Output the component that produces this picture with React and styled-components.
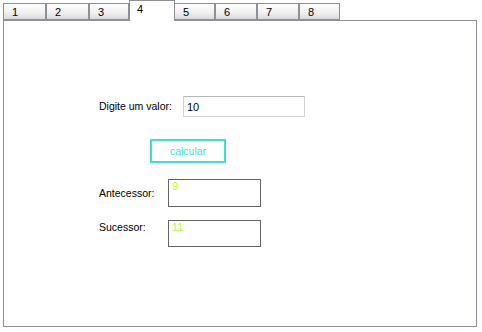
import React from "react";
import styled, { createGlobalStyle } from "styled-components";

const Global = createGlobalStyle`
  html, body { margin: 0; padding: 0; background: #ffffff; }
  body { font-family: "Liberation Sans", Arial, sans-serif; font-size: 11px; color: #000; }
`;

const Page = styled.div`
  width: 482px;
  height: 332px;
  padding-left: 3px;
  box-sizing: border-box;
`;

const TabStrip = styled.div`
  display: flex;
  align-items: flex-end;
  height: 20px;
  position: relative;
  z-index: 1;
`;

const Tab = styled.div`
  box-sizing: border-box;
  width: ${(p) => p.$w}px;
  height: ${(p) => (p.$active ? 21 : 17)}px;
  margin-left: ${(p) => p.$ml || 0}px;
  margin-bottom: ${(p) => (p.$active ? -1 : 0)}px;
  border: 1px solid #8d8f99;
  border-bottom: ${(p) => (p.$active ? "none" : "1px solid #8d8f99")};
  background: ${(p) =>
    p.$active ? "#ffffff" : "linear-gradient(#fdfdfd 0%, #f1f1f1 55%, #d9d9dc 100%)"};
  padding-left: ${(p) => (p.$active ? 7 : 8)}px;
  padding-top: 2px;
  font-size: 11px;
  line-height: 12px;
  color: #000;
`;

const Panel = styled.div`
  box-sizing: border-box;
  width: 474px;
  height: 307px;
  border: 1px solid #8d8f99;
  background: #fff;
  padding: 75px 0 0 95px;
`;

const Row = styled.div`
  display: flex;
  align-items: ${(p) => p.$align || "center"};
  margin-top: ${(p) => p.$mt || 0}px;
`;

const Label = styled.label`
  width: ${(p) => p.$w}px;
  flex: none;
  font-size: 10.5px;
  line-height: 13px;
  color: #000;
  padding-top: ${(p) => p.$pt || 0}px;
`;

const TextInput = styled.input`
  box-sizing: border-box;
  width: 122px;
  height: 21px;
  border: 1px solid #cfd2d6;
  border-top-color: #b3b6ba;
  padding: 0 0 0 3px;
  font-family: "Liberation Sans", Arial, sans-serif;
  font-size: 11px;
  color: #000000;
  -webkit-text-fill-color: #000000;
  outline: none;
  background: #fff;
`;

const CalcButton = styled.button`
  box-sizing: border-box;
  display: block;
  margin: 22px 0 0 51px;
  width: 76px;
  height: 24px;
  border: 2px solid #40e0d0;
  background: #fff;
  color: #40e0d0;
  font-family: "Liberation Sans", Arial, sans-serif;
  font-size: 10.5px;
  padding: 0;
`;

const ResultBox = styled.div`
  box-sizing: border-box;
  width: 93px;
  height: ${(p) => p.$h}px;
  border: 1px solid #646464;
  padding: 0 0 0 3px;
  font-size: 11px;
  line-height: 13px;
  color: #adff2f;
`;

const tabs = [
  { n: "1", w: 43 },
  { n: "2", w: 43 },
  { n: "3", w: 40 },
  { n: "4", w: 46, active: true },
  { n: "5", w: 41, ml: -1 },
  { n: "6", w: 42 },
  { n: "7", w: 42 },
  { n: "8", w: 41 },
];

export default function App() {
  return (
    <Page>
      <Global />
      <TabStrip>
        {tabs.map((t) => (
          <Tab key={t.n} $w={t.w} $active={t.active} $ml={t.ml}>
            {t.n}
          </Tab>
        ))}
      </TabStrip>
      <Panel>
        <Row>
          <Label $w={84}>Digite um valor:</Label>
          <TextInput defaultValue="10" />
        </Row>
        <CalcButton>calcular</CalcButton>
        <Row $mt={16}>
          <Label $w={69}>Antecessor:</Label>
          <ResultBox $h={28}>9</ResultBox>
        </Row>
        <Row $mt={13} $align="flex-start">
          <Label $w={69} $pt={1}>Sucessor:</Label>
          <ResultBox $h={27}>11</ResultBox>
        </Row>
      </Panel>
    </Page>
  );
}
